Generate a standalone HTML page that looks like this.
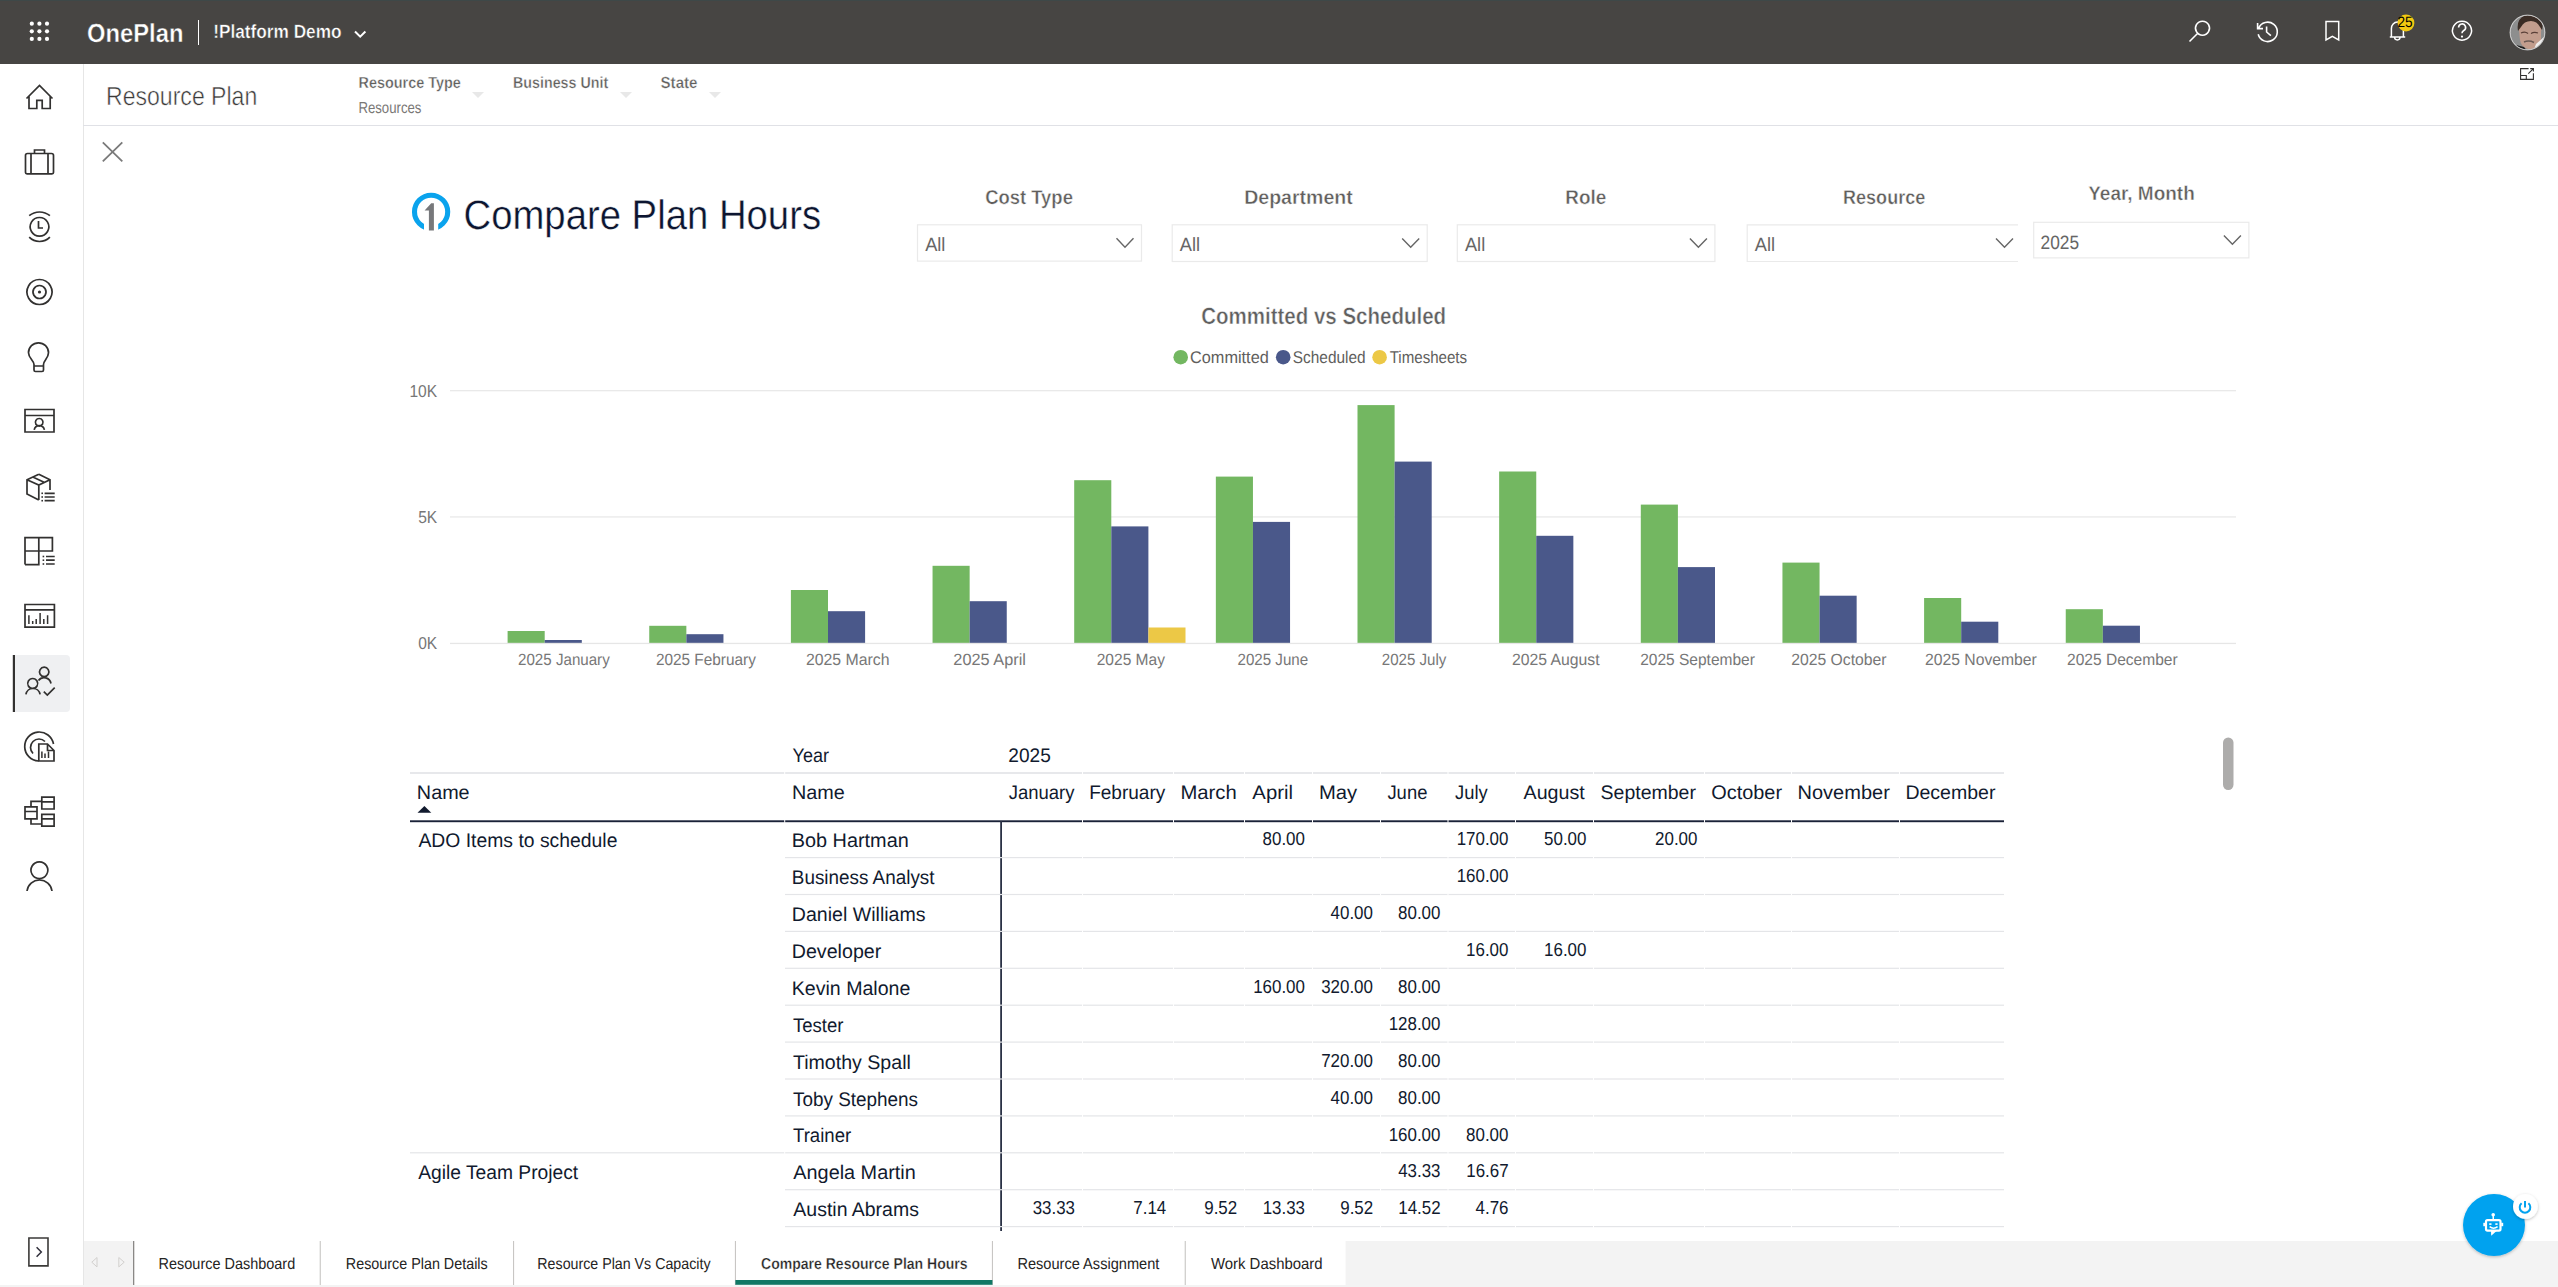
<!DOCTYPE html>
<html><head><meta charset="utf-8"><title>OnePlan - Compare Plan Hours</title>
<style>
html,body{margin:0;padding:0;background:#fff;overflow:hidden;}
body{width:2558px;height:1287px;position:relative;font-family:"Liberation Sans",sans-serif;}
svg{position:absolute;left:0;top:0;}
svg text{font-family:"Liberation Sans",sans-serif;}
</style></head>
<body>
<svg width="2558" height="1287" viewBox="0 0 2558 1287" text-rendering="geometricPrecision" shape-rendering="auto">
<rect x="0.00" y="0.00" width="2558.00" height="64.00" fill="#474543"/>
<rect x="0.00" y="0.00" width="2558.00" height="1.00" fill="#3e4848"/>
<circle cx="31.8" cy="23.7" r="2.1" fill="#fff"/>
<circle cx="31.8" cy="31.3" r="2.1" fill="#fff"/>
<circle cx="31.8" cy="38.9" r="2.1" fill="#fff"/>
<circle cx="39.4" cy="23.7" r="2.1" fill="#fff"/>
<circle cx="39.4" cy="31.3" r="2.1" fill="#fff"/>
<circle cx="39.4" cy="38.9" r="2.1" fill="#fff"/>
<circle cx="47.0" cy="23.7" r="2.1" fill="#fff"/>
<circle cx="47.0" cy="31.3" r="2.1" fill="#fff"/>
<circle cx="47.0" cy="38.9" r="2.1" fill="#fff"/>
<text x="87.05" y="41.70" font-size="26.02" font-weight="bold" fill="#fff" textLength="96.42" lengthAdjust="spacingAndGlyphs" stroke="#474543" stroke-width="0.4">OnePlan</text>
<rect x="198.00" y="20.00" width="1.00" height="25.00" fill="#fff"/>
<text x="213.26" y="37.90" font-size="19.19" font-weight="bold" fill="#fff" textLength="128.29" lengthAdjust="spacingAndGlyphs" stroke="#474543" stroke-width="0.4">!Platform Demo</text>
<path d="M355,31.5 L360.2,36.7 L365.4,31.5" fill="none" stroke="#fff" stroke-width="2"/>
<path d="M2202.5,21.2 a7,7 0 1 1 -0.01,0 Z M2197.5,33.5 L2189.5,41.5" fill="none" stroke="#fff" stroke-width="1.6"/>
<path d="M2258.2,34.3 A9.7,9.7 0 1 0 2258.6,28.2 M2257.6,23 V28.6 H2263 M2266.6,26.6 V32 L2270.9,35.6" fill="none" stroke="#fff" stroke-width="1.6"/>
<path d="M2326,21.5 H2338.7 V40 L2332.35,36.4 L2326,40 Z" fill="none" stroke="#fff" stroke-width="1.5"/>
<path d="M2389.8,36.9 H2405.2 M2391.4,36.9 V28.5 A5.8,6.2 0 0 1 2403.4,28.5 V36.9 M2394.6,37.3 a2.7,2.6 0 0 0 5.4,0" fill="none" stroke="#fff" stroke-width="1.5"/>
<circle cx="2406" cy="23" r="8.4" fill="#f2c811"/>
<text x="2397.52" y="26.60" font-size="14.97" font-weight="normal" fill="#000" textLength="15.16" lengthAdjust="spacingAndGlyphs">25</text>
<path d="M2462,21.2 a9.5,9.5 0 1 1 -0.01,0 Z" fill="none" stroke="#fff" stroke-width="1.5"/>
<path d="M2458.6,27.5 a3.5,3.5 0 1 1 5.2,3 c-1.2,0.7 -1.8,1.4 -1.8,2.8" fill="none" stroke="#fff" stroke-width="1.6"/>
<circle cx="2462" cy="36.6" r="1.1" fill="#fff"/>
<defs><radialGradient id="av" cx="50%" cy="40%" r="60%"><stop offset="0" stop-color="#9a9590"/><stop offset="0.6" stop-color="#6c6864"/><stop offset="1" stop-color="#3b3936"/></radialGradient><clipPath id="avc"><circle cx="2527.5" cy="32.5" r="17"/></clipPath></defs>
<circle cx="2527.5" cy="32.5" r="17.6" fill="#c9c9c9"/>
<g clip-path="url(#avc)"><rect x="2509" y="14" width="38" height="38" fill="#8d8e8e"/><path d="M2519,30 Q2517,20 2524,17 Q2532,14 2539,19 Q2543,24 2541,32 L2541,44 Q2536,50 2528,49 Q2521,47 2520,40 Z" fill="#c29d8d"/><path d="M2518,31 Q2516,19 2525,15.5 Q2534,13.5 2540,18 Q2544,23 2542,30 L2540,27 Q2537,21 2531,21 Q2524,21 2521,27 Z" fill="#3a2c25"/><path d="M2521,33 Q2525,31 2528,33.5 M2531,33.5 Q2534,31.5 2538,33" stroke="#5a4038" stroke-width="1.3" fill="none"/><path d="M2524,42 Q2529,40 2534,42.5" stroke="#6b5a55" stroke-width="1.5" fill="none"/><path d="M2536,44 L2545,36 L2547,52 L2533,52 Z" fill="#eeeeee"/><path d="M2512,52 L2516,45 L2524,47 L2528,52 Z" fill="#1e1e1e"/></g>
<circle cx="2527.5" cy="32.5" r="17.4" fill="none" stroke="#cfcfcf" stroke-width="0.9"/>
<rect x="83.00" y="64.00" width="1.00" height="1223.00" fill="#e6e6e6"/>
<path d="M26.5,98.5 L39.5,85.5 L52.5,98.5 M29,96.5 V108.5 H36.8 V100.3 H42.2 V108.5 H50.2 V96.5" fill="none" stroke="#323130" stroke-width="1.7"/>
<path d="M25.5,155.5 Q25.5,153.5 27.5,153.5 H51.5 Q53.5,153.5 53.5,155.5 V172.5 Q53.5,173.8 52,173.8 H27 Q25.5,173.8 25.5,172.5 Z M34.5,153.5 V150 H44.5 V153.5 M31,153.5 V173.8 M48,153.5 V173.8" fill="none" stroke="#323130" stroke-width="1.7"/>
<path d="M39.5,217.5 a9.3,9.3 0 1 1 -0.01,0 Z M38.5,221 V228 H43" fill="none" stroke="#323130" stroke-width="1.7"/>
<path d="M29.2,215.7 A16.3,16.3 0 0 1 49.9,215.7 M29.2,237.1 A14.4,14.4 0 0 0 49.9,237.1" fill="none" stroke="#323130" stroke-width="1.7"/>
<path d="M39.5,279.5 a12.5,12.5 0 1 1 -0.01,0 Z M39.5,285.5 a6.5,6.5 0 1 1 -0.01,0 Z" fill="none" stroke="#323130" stroke-width="1.7"/>
<circle cx="39.5" cy="292" r="1.6" fill="#323130"/>
<path d="M34,364.5 C34,360.5 28.5,358 28.5,352.8 A10,10 0 1 1 48.5,352.8 C48.5,358 43.5,360.5 43.5,364.5 V370 Q43.5,371.5 42,371.5 H35.5 Q34,371.5 34,370 Z M34,366 H43.5" fill="none" stroke="#323130" stroke-width="1.7"/>
<path d="M25,409.5 H54 V432 H25 Z M25,415.5 H54" fill="none" stroke="#323130" stroke-width="1.7"/>
<path d="M39.2,418.5 a3.8,3.8 0 1 1 -0.01,0 Z M34.2,429.8 A5.2,5.2 0 0 1 44.4,429.8" fill="none" stroke="#323130" stroke-width="1.7"/>
<path d="M38.8,474.3 L50,479.7 V490 M38.8,474.3 L27,479.7 V494 L38.8,500 M27,479.7 L38.8,485.1 L50,479.7 M38.8,485.1 V500 M32.8,477 L44.6,482.4" fill="none" stroke="#323130" stroke-width="1.7"/>
<path d="M44.6,493.3 H54.7 M44.6,497 H54.7 M44.6,500.7 H54.7" fill="none" stroke="#323130" stroke-width="1.7"/>
<rect x="41.4" y="492.5" width="1.6" height="1.6" fill="#323130"/><rect x="41.4" y="496.2" width="1.6" height="1.6" fill="#323130"/><rect x="41.4" y="499.9" width="1.6" height="1.6" fill="#323130"/>
<path d="M25,564.6 V537.6 H52.4 V551 H25 M38.8,537.6 V564.6 H25" fill="none" stroke="#323130" stroke-width="1.7"/>
<path d="M46,556.5 H54.7 M46,560.2 H54.7 M46,564 H54.7" fill="none" stroke="#323130" stroke-width="1.7"/>
<rect x="42.6" y="555.7" width="1.6" height="1.6" fill="#323130"/><rect x="42.6" y="559.4" width="1.6" height="1.6" fill="#323130"/><rect x="42.6" y="563.2" width="1.6" height="1.6" fill="#323130"/>
<path d="M25,604.5 H54.4 V627.1 H25 Z M25,609.8 H54.4" fill="none" stroke="#323130" stroke-width="1.7"/>
<path d="M28.9,615.3 V624 M32.7,621 V624 M36.2,619 V624 M40.1,613 V624 M43.8,619 V624 M47.6,615.3 V624" fill="none" stroke="#323130" stroke-width="1.5"/>
<path d="M14.5,655 H66 Q70,655 70,659 V708 Q70,712 66,712 H14.5 Z" fill="#eff0f2"/>
<rect x="12.80" y="655.00" width="2.20" height="57.00" fill="#323130"/>
<path d="M44.2,667.2 a4.7,4.7 0 1 1 -0.01,0 Z M38.5,680.5 A7,7 0 0 1 51,683.5" fill="none" stroke="#323130" stroke-width="1.7"/>
<path d="M32.7,678.5 a5,5 0 1 1 -0.01,0 Z M25.9,694.4 A7.2,7.2 0 0 1 40.1,694.4" fill="none" stroke="#323130" stroke-width="1.7"/>
<path d="M43.8,691.7 L47.3,695 L54.7,687.6" fill="none" stroke="#323130" stroke-width="1.7"/>
<path d="M38.5,761 A14.5,14.5 0 1 1 53.5,744" fill="none" stroke="#323130" stroke-width="1.7"/>
<path d="M33,753.5 A7.5,7.5 0 0 1 45,741.5" fill="none" stroke="#323130" stroke-width="1.7"/>
<path d="M38.8,744 H47.5 L54,750.5 V761 H38.8 Z M47.5,744 V750.5 H54" fill="none" stroke="#323130" stroke-width="1.7"/>
<path d="M41.9,751.5 V758 M45,753.5 V758 M48.5,751.5 V758" fill="none" stroke="#323130" stroke-width="1.5"/>
<path d="M41.8,797.1 H54.1 V809 H41.8 Z M41.8,801.8 H54.1 M25,806.9 H37 V818.9 H25 Z M25,811.5 H37 M41.8,814.3 H54.1 V826.1 H41.8 Z M41.8,818.9 H54.1" fill="none" stroke="#323130" stroke-width="1.7"/>
<path d="M31,806.9 V801.3 H41.8 M31,818.9 V824 H41.8" fill="none" stroke="#323130" stroke-width="1.7"/>
<path d="M39.4,861.8 a8.4,8.4 0 1 1 -0.01,0 Z M27,891 A12.6,12.6 0 0 1 52,891" fill="none" stroke="#323130" stroke-width="1.7"/>
<path d="M28.9,1238 H48 V1265.9 H28.9 Z" fill="none" stroke="#3b3a38" stroke-width="1.6"/>
<path d="M36.6,1247.3 L41.3,1252 L36.6,1256.7" fill="none" stroke="#2f2e3a" stroke-width="1.5"/>
<text x="106.00" y="105.00" font-size="26.31" font-weight="normal" fill="#3b3a39" textLength="151.28" lengthAdjust="spacingAndGlyphs" stroke="#fff" stroke-width="0.5">Resource Plan</text>
<text x="358.53" y="88.20" font-size="15.99" font-weight="bold" fill="#605e5c" textLength="102.35" lengthAdjust="spacingAndGlyphs" stroke="#fff" stroke-width="0.35">Resource Type</text>
<text x="358.41" y="112.80" font-size="15.99" font-weight="normal" fill="#7a7876" textLength="63.05" lengthAdjust="spacingAndGlyphs">Resources</text>
<text x="513.04" y="88.20" font-size="15.99" font-weight="bold" fill="#605e5c" textLength="95.15" lengthAdjust="spacingAndGlyphs" stroke="#fff" stroke-width="0.35">Business Unit</text>
<text x="660.55" y="88.20" font-size="15.99" font-weight="bold" fill="#605e5c" textLength="36.95" lengthAdjust="spacingAndGlyphs" stroke="#fff" stroke-width="0.35">State</text>
<path d="M472,92 H484 L478,98 Z" fill="#e8e8e8"/>
<path d="M620,92 H632 L626,98 Z" fill="#e8e8e8"/>
<path d="M709,92 H721 L715,98 Z" fill="#e8e8e8"/>
<rect x="83.00" y="125.00" width="2475.00" height="1.00" fill="#e0e1e6"/>
<path d="M2528.6,68.6 H2520.6 V79.4 H2533.4 V73.3 M2520.6,75.5 H2526.3 V79.4 M2530.2,68.6 H2533.4 V71.5 M2528.3,73.7 L2533.2,68.8" fill="none" stroke="#323130" stroke-width="1.1"/>
<path d="M102.8,142.4 L122.3,161.3 M122.3,142.4 L102.8,161.3" fill="none" stroke="#7a7a7a" stroke-width="1.8"/>
<circle cx="431.1" cy="211.8" r="16.6" fill="none" stroke="#0aa3ed" stroke-width="5.1"/>
<rect x="424.00" y="219.00" width="14.20" height="14.00" fill="#fff"/>
<path d="M428.9,210.4 H424.6 L431.2,203.3 H433.9 V230.6 H428.9 Z" fill="#77787b"/>
<text x="463.49" y="229.00" font-size="41.28" font-weight="normal" fill="#0c1530" textLength="357.56" lengthAdjust="spacingAndGlyphs" stroke="#fff" stroke-width="0.4">Compare Plan Hours</text>
<text x="985.16" y="204.00" font-size="20.06" font-weight="bold" fill="#605e5c" textLength="87.73" lengthAdjust="spacingAndGlyphs" stroke="#fff" stroke-width="0.4">Cost Type</text>
<rect x="917.50" y="224.80" width="224.00" height="36.30" fill="#fff" stroke="#eaeaea" stroke-width="1.2"/>
<text x="925.15" y="250.70" font-size="19.19" font-weight="normal" fill="#666" textLength="20.26" lengthAdjust="spacingAndGlyphs">All</text>
<path d="M1116.5,238.25000000000003 L1125,247.15 L1133.5,238.25000000000003" fill="none" stroke="#666" stroke-width="1.4"/>
<text x="1244.18" y="204.00" font-size="20.06" font-weight="bold" fill="#605e5c" textLength="108.65" lengthAdjust="spacingAndGlyphs" stroke="#fff" stroke-width="0.4">Department</text>
<rect x="1172.20" y="224.80" width="255.00" height="36.70" fill="#fff" stroke="#eaeaea" stroke-width="1.2"/>
<text x="1179.85" y="251.10" font-size="19.19" font-weight="normal" fill="#666" textLength="20.26" lengthAdjust="spacingAndGlyphs">All</text>
<path d="M1402.2,238.45000000000002 L1410.7,247.35 L1419.2,238.45000000000002" fill="none" stroke="#666" stroke-width="1.4"/>
<text x="1565.33" y="204.00" font-size="20.06" font-weight="bold" fill="#605e5c" textLength="40.93" lengthAdjust="spacingAndGlyphs" stroke="#fff" stroke-width="0.4">Role</text>
<rect x="1457.30" y="224.80" width="257.60" height="36.70" fill="#fff" stroke="#eaeaea" stroke-width="1.2"/>
<text x="1464.95" y="251.10" font-size="19.19" font-weight="normal" fill="#666" textLength="20.26" lengthAdjust="spacingAndGlyphs">All</text>
<path d="M1689.9,238.45000000000002 L1698.4,247.35 L1706.9,238.45000000000002" fill="none" stroke="#666" stroke-width="1.4"/>
<text x="1843.08" y="204.00" font-size="20.06" font-weight="bold" fill="#605e5c" textLength="82.11" lengthAdjust="spacingAndGlyphs" stroke="#fff" stroke-width="0.4">Resource</text>
<path d="M2018.00,224.80 H1747.20 V261.50 H2018.00" fill="#fff" stroke="#eaeaea" stroke-width="1.2"/>
<text x="1754.85" y="251.10" font-size="19.19" font-weight="normal" fill="#666" textLength="20.26" lengthAdjust="spacingAndGlyphs">All</text>
<path d="M1996.0,238.45000000000002 L2004.5,247.35 L2013.0,238.45000000000002" fill="none" stroke="#666" stroke-width="1.4"/>
<text x="2088.27" y="200.20" font-size="20.06" font-weight="bold" fill="#605e5c" textLength="106.47" lengthAdjust="spacingAndGlyphs" stroke="#fff" stroke-width="0.4">Year, Month</text>
<rect x="2033.70" y="222.30" width="215.20" height="35.60" fill="#fff" stroke="#eaeaea" stroke-width="1.2"/>
<text x="2040.53" y="248.80" font-size="19.19" font-weight="normal" fill="#666" textLength="38.50" lengthAdjust="spacingAndGlyphs">2025</text>
<path d="M2223.9,235.4 L2232.4,244.29999999999998 L2240.9,235.4" fill="none" stroke="#666" stroke-width="1.4"/>
<text x="1201.18" y="323.70" font-size="23.55" font-weight="bold" fill="#5f5f5f" textLength="244.95" lengthAdjust="spacingAndGlyphs" stroke="#fff" stroke-width="0.45">Committed vs Scheduled</text>
<circle cx="1180.7" cy="357.2" r="7.3" fill="#73b761"/>
<circle cx="1283.2" cy="357.2" r="7.3" fill="#4a588a"/>
<circle cx="1379.6" cy="357.2" r="7.3" fill="#ecc846"/>
<text x="1189.99" y="363.20" font-size="17.01" font-weight="normal" fill="#605e5c" textLength="78.77" lengthAdjust="spacingAndGlyphs">Committed</text>
<text x="1292.81" y="363.20" font-size="17.01" font-weight="normal" fill="#605e5c" textLength="72.77" lengthAdjust="spacingAndGlyphs">Scheduled</text>
<text x="1389.66" y="363.20" font-size="17.01" font-weight="normal" fill="#605e5c" textLength="77.45" lengthAdjust="spacingAndGlyphs">Timesheets</text>
<rect x="450.00" y="390.00" width="1786.00" height="1.30" fill="#e9e9e9"/>
<rect x="450.00" y="516.30" width="1786.00" height="1.30" fill="#e9e9e9"/>
<text x="409.43" y="396.70" font-size="17.30" font-weight="normal" fill="#777" textLength="27.75" lengthAdjust="spacingAndGlyphs">10K</text>
<text x="418.18" y="522.70" font-size="17.30" font-weight="normal" fill="#777" textLength="19.03" lengthAdjust="spacingAndGlyphs">5K</text>
<text x="418.18" y="649.10" font-size="17.30" font-weight="normal" fill="#777" textLength="19.03" lengthAdjust="spacingAndGlyphs">0K</text>
<rect x="507.60" y="631.00" width="37.10" height="12.20" fill="#73b761"/>
<rect x="544.70" y="640.00" width="37.10" height="3.20" fill="#4a588a"/>
<rect x="649.25" y="625.80" width="37.10" height="17.40" fill="#73b761"/>
<rect x="686.35" y="634.20" width="37.10" height="9.00" fill="#4a588a"/>
<rect x="790.90" y="590.00" width="37.10" height="53.20" fill="#73b761"/>
<rect x="828.00" y="611.20" width="37.10" height="32.00" fill="#4a588a"/>
<rect x="932.55" y="565.80" width="37.10" height="77.40" fill="#73b761"/>
<rect x="969.65" y="601.20" width="37.10" height="42.00" fill="#4a588a"/>
<rect x="1074.20" y="480.20" width="37.10" height="163.00" fill="#73b761"/>
<rect x="1111.30" y="526.40" width="37.10" height="116.80" fill="#4a588a"/>
<rect x="1148.40" y="627.50" width="37.10" height="15.70" fill="#ecc846"/>
<rect x="1215.85" y="476.60" width="37.10" height="166.60" fill="#73b761"/>
<rect x="1252.95" y="521.90" width="37.10" height="121.30" fill="#4a588a"/>
<rect x="1357.50" y="405.10" width="37.10" height="238.10" fill="#73b761"/>
<rect x="1394.60" y="461.60" width="37.10" height="181.60" fill="#4a588a"/>
<rect x="1499.15" y="471.50" width="37.10" height="171.70" fill="#73b761"/>
<rect x="1536.25" y="535.80" width="37.10" height="107.40" fill="#4a588a"/>
<rect x="1640.80" y="504.60" width="37.10" height="138.60" fill="#73b761"/>
<rect x="1677.90" y="567.10" width="37.10" height="76.10" fill="#4a588a"/>
<rect x="1782.45" y="562.60" width="37.10" height="80.60" fill="#73b761"/>
<rect x="1819.55" y="595.70" width="37.10" height="47.50" fill="#4a588a"/>
<rect x="1924.10" y="598.00" width="37.10" height="45.20" fill="#73b761"/>
<rect x="1961.20" y="621.70" width="37.10" height="21.50" fill="#4a588a"/>
<rect x="2065.75" y="609.20" width="37.10" height="34.00" fill="#73b761"/>
<rect x="2102.85" y="625.70" width="37.10" height="17.50" fill="#4a588a"/>
<rect x="450.00" y="642.80" width="1786.00" height="1.30" fill="#e6e6e6"/>
<text x="518.04" y="665.00" font-size="16.28" font-weight="normal" fill="#777" textLength="91.70" lengthAdjust="spacingAndGlyphs">2025 January</text>
<text x="655.93" y="665.00" font-size="16.28" font-weight="normal" fill="#777" textLength="99.89" lengthAdjust="spacingAndGlyphs">2025 February</text>
<text x="805.91" y="665.00" font-size="16.28" font-weight="normal" fill="#777" textLength="83.60" lengthAdjust="spacingAndGlyphs">2025 March</text>
<text x="953.38" y="665.00" font-size="16.28" font-weight="normal" fill="#777" textLength="72.52" lengthAdjust="spacingAndGlyphs">2025 April</text>
<text x="1096.72" y="665.00" font-size="16.28" font-weight="normal" fill="#777" textLength="68.20" lengthAdjust="spacingAndGlyphs">2025 May</text>
<text x="1237.54" y="665.00" font-size="16.28" font-weight="normal" fill="#777" textLength="70.61" lengthAdjust="spacingAndGlyphs">2025 June</text>
<text x="1381.75" y="665.00" font-size="16.28" font-weight="normal" fill="#777" textLength="64.61" lengthAdjust="spacingAndGlyphs">2025 July</text>
<text x="1511.91" y="665.00" font-size="16.28" font-weight="normal" fill="#777" textLength="87.72" lengthAdjust="spacingAndGlyphs">2025 August</text>
<text x="1640.23" y="665.00" font-size="16.28" font-weight="normal" fill="#777" textLength="114.60" lengthAdjust="spacingAndGlyphs">2025 September</text>
<text x="1791.21" y="665.00" font-size="16.28" font-weight="normal" fill="#777" textLength="95.42" lengthAdjust="spacingAndGlyphs">2025 October</text>
<text x="1924.91" y="665.00" font-size="16.28" font-weight="normal" fill="#777" textLength="111.93" lengthAdjust="spacingAndGlyphs">2025 November</text>
<text x="2067.02" y="665.00" font-size="16.28" font-weight="normal" fill="#777" textLength="110.62" lengthAdjust="spacingAndGlyphs">2025 December</text>
<text x="792.59" y="762.00" font-size="19.62" font-weight="normal" fill="#111a2e" textLength="36.39" lengthAdjust="spacingAndGlyphs">Year</text>
<text x="1008.35" y="762.00" font-size="19.62" font-weight="normal" fill="#111a2e" textLength="42.46" lengthAdjust="spacingAndGlyphs">2025</text>
<rect x="410.00" y="772.10" width="1594.00" height="1.80" fill="#e5e6e9"/>
<text x="416.87" y="799.00" font-size="19.62" font-weight="normal" fill="#111a2e" textLength="52.77" lengthAdjust="spacingAndGlyphs">Name</text>
<text x="791.97" y="799.00" font-size="19.62" font-weight="normal" fill="#111a2e" textLength="52.77" lengthAdjust="spacingAndGlyphs">Name</text>
<text x="1008.72" y="799.00" font-size="19.62" font-weight="normal" fill="#111a2e" textLength="65.73" lengthAdjust="spacingAndGlyphs">January</text>
<text x="1089.13" y="799.00" font-size="19.62" font-weight="normal" fill="#111a2e" textLength="76.20" lengthAdjust="spacingAndGlyphs">February</text>
<text x="1180.43" y="799.00" font-size="19.62" font-weight="normal" fill="#111a2e" textLength="56.25" lengthAdjust="spacingAndGlyphs">March</text>
<text x="1252.35" y="799.00" font-size="19.62" font-weight="normal" fill="#111a2e" textLength="40.63" lengthAdjust="spacingAndGlyphs">April</text>
<text x="1318.93" y="799.00" font-size="19.62" font-weight="normal" fill="#111a2e" textLength="38.20" lengthAdjust="spacingAndGlyphs">May</text>
<text x="1387.42" y="799.00" font-size="19.62" font-weight="normal" fill="#111a2e" textLength="39.98" lengthAdjust="spacingAndGlyphs">June</text>
<text x="1455.02" y="799.00" font-size="19.62" font-weight="normal" fill="#111a2e" textLength="32.64" lengthAdjust="spacingAndGlyphs">July</text>
<text x="1523.55" y="799.00" font-size="19.62" font-weight="normal" fill="#111a2e" textLength="61.11" lengthAdjust="spacingAndGlyphs">August</text>
<text x="1600.62" y="799.00" font-size="19.62" font-weight="normal" fill="#111a2e" textLength="95.30" lengthAdjust="spacingAndGlyphs">September</text>
<text x="1711.25" y="799.00" font-size="19.62" font-weight="normal" fill="#111a2e" textLength="70.84" lengthAdjust="spacingAndGlyphs">October</text>
<text x="1797.55" y="799.00" font-size="19.62" font-weight="normal" fill="#111a2e" textLength="92.26" lengthAdjust="spacingAndGlyphs">November</text>
<text x="1905.39" y="799.00" font-size="19.62" font-weight="normal" fill="#111a2e" textLength="90.11" lengthAdjust="spacingAndGlyphs">December</text>
<path d="M417.5,812.7 H431.3 L424.4,806 Z" fill="#111a2e"/>
<rect x="410.00" y="820.30" width="1594.00" height="1.90" fill="#1a2238"/>
<rect x="1000.20" y="821.00" width="1.80" height="410.00" fill="#2a3145"/>
<rect x="785.00" y="857.00" width="1219.00" height="1.20" fill="#e4e5e8"/>
<rect x="785.00" y="893.90" width="1219.00" height="1.20" fill="#e4e5e8"/>
<rect x="785.00" y="930.80" width="1219.00" height="1.20" fill="#e4e5e8"/>
<rect x="785.00" y="967.70" width="1219.00" height="1.20" fill="#e4e5e8"/>
<rect x="785.00" y="1004.60" width="1219.00" height="1.20" fill="#e4e5e8"/>
<rect x="785.00" y="1041.50" width="1219.00" height="1.20" fill="#e4e5e8"/>
<rect x="785.00" y="1078.40" width="1219.00" height="1.20" fill="#e4e5e8"/>
<rect x="785.00" y="1115.30" width="1219.00" height="1.20" fill="#e4e5e8"/>
<rect x="410.00" y="1152.20" width="1594.00" height="1.20" fill="#e4e5e8"/>
<rect x="785.00" y="1189.10" width="1219.00" height="1.20" fill="#e4e5e8"/>
<rect x="785.00" y="1226.00" width="1219.00" height="1.20" fill="#e4e5e8"/>
<rect x="784.20" y="771.50" width="1.00" height="3.00" fill="#fff"/>
<rect x="784.20" y="819.80" width="1.00" height="3.00" fill="#fff"/>
<rect x="784.20" y="1151.70" width="1.00" height="2.20" fill="#fff"/>
<rect x="1082.00" y="771.50" width="1.00" height="3.00" fill="#fff"/>
<rect x="1082.00" y="819.80" width="1.00" height="3.00" fill="#fff"/>
<rect x="1082.00" y="856.50" width="1.00" height="2.20" fill="#fff"/>
<rect x="1082.00" y="893.40" width="1.00" height="2.20" fill="#fff"/>
<rect x="1082.00" y="930.30" width="1.00" height="2.20" fill="#fff"/>
<rect x="1082.00" y="967.20" width="1.00" height="2.20" fill="#fff"/>
<rect x="1082.00" y="1004.10" width="1.00" height="2.20" fill="#fff"/>
<rect x="1082.00" y="1041.00" width="1.00" height="2.20" fill="#fff"/>
<rect x="1082.00" y="1077.90" width="1.00" height="2.20" fill="#fff"/>
<rect x="1082.00" y="1114.80" width="1.00" height="2.20" fill="#fff"/>
<rect x="1082.00" y="1151.70" width="1.00" height="2.20" fill="#fff"/>
<rect x="1082.00" y="1188.60" width="1.00" height="2.20" fill="#fff"/>
<rect x="1082.00" y="1225.50" width="1.00" height="2.20" fill="#fff"/>
<rect x="1173.00" y="771.50" width="1.00" height="3.00" fill="#fff"/>
<rect x="1173.00" y="819.80" width="1.00" height="3.00" fill="#fff"/>
<rect x="1173.00" y="856.50" width="1.00" height="2.20" fill="#fff"/>
<rect x="1173.00" y="893.40" width="1.00" height="2.20" fill="#fff"/>
<rect x="1173.00" y="930.30" width="1.00" height="2.20" fill="#fff"/>
<rect x="1173.00" y="967.20" width="1.00" height="2.20" fill="#fff"/>
<rect x="1173.00" y="1004.10" width="1.00" height="2.20" fill="#fff"/>
<rect x="1173.00" y="1041.00" width="1.00" height="2.20" fill="#fff"/>
<rect x="1173.00" y="1077.90" width="1.00" height="2.20" fill="#fff"/>
<rect x="1173.00" y="1114.80" width="1.00" height="2.20" fill="#fff"/>
<rect x="1173.00" y="1151.70" width="1.00" height="2.20" fill="#fff"/>
<rect x="1173.00" y="1188.60" width="1.00" height="2.20" fill="#fff"/>
<rect x="1173.00" y="1225.50" width="1.00" height="2.20" fill="#fff"/>
<rect x="1244.00" y="771.50" width="1.00" height="3.00" fill="#fff"/>
<rect x="1244.00" y="819.80" width="1.00" height="3.00" fill="#fff"/>
<rect x="1244.00" y="856.50" width="1.00" height="2.20" fill="#fff"/>
<rect x="1244.00" y="893.40" width="1.00" height="2.20" fill="#fff"/>
<rect x="1244.00" y="930.30" width="1.00" height="2.20" fill="#fff"/>
<rect x="1244.00" y="967.20" width="1.00" height="2.20" fill="#fff"/>
<rect x="1244.00" y="1004.10" width="1.00" height="2.20" fill="#fff"/>
<rect x="1244.00" y="1041.00" width="1.00" height="2.20" fill="#fff"/>
<rect x="1244.00" y="1077.90" width="1.00" height="2.20" fill="#fff"/>
<rect x="1244.00" y="1114.80" width="1.00" height="2.20" fill="#fff"/>
<rect x="1244.00" y="1151.70" width="1.00" height="2.20" fill="#fff"/>
<rect x="1244.00" y="1188.60" width="1.00" height="2.20" fill="#fff"/>
<rect x="1244.00" y="1225.50" width="1.00" height="2.20" fill="#fff"/>
<rect x="1312.00" y="771.50" width="1.00" height="3.00" fill="#fff"/>
<rect x="1312.00" y="819.80" width="1.00" height="3.00" fill="#fff"/>
<rect x="1312.00" y="856.50" width="1.00" height="2.20" fill="#fff"/>
<rect x="1312.00" y="893.40" width="1.00" height="2.20" fill="#fff"/>
<rect x="1312.00" y="930.30" width="1.00" height="2.20" fill="#fff"/>
<rect x="1312.00" y="967.20" width="1.00" height="2.20" fill="#fff"/>
<rect x="1312.00" y="1004.10" width="1.00" height="2.20" fill="#fff"/>
<rect x="1312.00" y="1041.00" width="1.00" height="2.20" fill="#fff"/>
<rect x="1312.00" y="1077.90" width="1.00" height="2.20" fill="#fff"/>
<rect x="1312.00" y="1114.80" width="1.00" height="2.20" fill="#fff"/>
<rect x="1312.00" y="1151.70" width="1.00" height="2.20" fill="#fff"/>
<rect x="1312.00" y="1188.60" width="1.00" height="2.20" fill="#fff"/>
<rect x="1312.00" y="1225.50" width="1.00" height="2.20" fill="#fff"/>
<rect x="1380.00" y="771.50" width="1.00" height="3.00" fill="#fff"/>
<rect x="1380.00" y="819.80" width="1.00" height="3.00" fill="#fff"/>
<rect x="1380.00" y="856.50" width="1.00" height="2.20" fill="#fff"/>
<rect x="1380.00" y="893.40" width="1.00" height="2.20" fill="#fff"/>
<rect x="1380.00" y="930.30" width="1.00" height="2.20" fill="#fff"/>
<rect x="1380.00" y="967.20" width="1.00" height="2.20" fill="#fff"/>
<rect x="1380.00" y="1004.10" width="1.00" height="2.20" fill="#fff"/>
<rect x="1380.00" y="1041.00" width="1.00" height="2.20" fill="#fff"/>
<rect x="1380.00" y="1077.90" width="1.00" height="2.20" fill="#fff"/>
<rect x="1380.00" y="1114.80" width="1.00" height="2.20" fill="#fff"/>
<rect x="1380.00" y="1151.70" width="1.00" height="2.20" fill="#fff"/>
<rect x="1380.00" y="1188.60" width="1.00" height="2.20" fill="#fff"/>
<rect x="1380.00" y="1225.50" width="1.00" height="2.20" fill="#fff"/>
<rect x="1447.50" y="771.50" width="1.00" height="3.00" fill="#fff"/>
<rect x="1447.50" y="819.80" width="1.00" height="3.00" fill="#fff"/>
<rect x="1447.50" y="856.50" width="1.00" height="2.20" fill="#fff"/>
<rect x="1447.50" y="893.40" width="1.00" height="2.20" fill="#fff"/>
<rect x="1447.50" y="930.30" width="1.00" height="2.20" fill="#fff"/>
<rect x="1447.50" y="967.20" width="1.00" height="2.20" fill="#fff"/>
<rect x="1447.50" y="1004.10" width="1.00" height="2.20" fill="#fff"/>
<rect x="1447.50" y="1041.00" width="1.00" height="2.20" fill="#fff"/>
<rect x="1447.50" y="1077.90" width="1.00" height="2.20" fill="#fff"/>
<rect x="1447.50" y="1114.80" width="1.00" height="2.20" fill="#fff"/>
<rect x="1447.50" y="1151.70" width="1.00" height="2.20" fill="#fff"/>
<rect x="1447.50" y="1188.60" width="1.00" height="2.20" fill="#fff"/>
<rect x="1447.50" y="1225.50" width="1.00" height="2.20" fill="#fff"/>
<rect x="1515.00" y="771.50" width="1.00" height="3.00" fill="#fff"/>
<rect x="1515.00" y="819.80" width="1.00" height="3.00" fill="#fff"/>
<rect x="1515.00" y="856.50" width="1.00" height="2.20" fill="#fff"/>
<rect x="1515.00" y="893.40" width="1.00" height="2.20" fill="#fff"/>
<rect x="1515.00" y="930.30" width="1.00" height="2.20" fill="#fff"/>
<rect x="1515.00" y="967.20" width="1.00" height="2.20" fill="#fff"/>
<rect x="1515.00" y="1004.10" width="1.00" height="2.20" fill="#fff"/>
<rect x="1515.00" y="1041.00" width="1.00" height="2.20" fill="#fff"/>
<rect x="1515.00" y="1077.90" width="1.00" height="2.20" fill="#fff"/>
<rect x="1515.00" y="1114.80" width="1.00" height="2.20" fill="#fff"/>
<rect x="1515.00" y="1151.70" width="1.00" height="2.20" fill="#fff"/>
<rect x="1515.00" y="1188.60" width="1.00" height="2.20" fill="#fff"/>
<rect x="1515.00" y="1225.50" width="1.00" height="2.20" fill="#fff"/>
<rect x="1593.00" y="771.50" width="1.00" height="3.00" fill="#fff"/>
<rect x="1593.00" y="819.80" width="1.00" height="3.00" fill="#fff"/>
<rect x="1593.00" y="856.50" width="1.00" height="2.20" fill="#fff"/>
<rect x="1593.00" y="893.40" width="1.00" height="2.20" fill="#fff"/>
<rect x="1593.00" y="930.30" width="1.00" height="2.20" fill="#fff"/>
<rect x="1593.00" y="967.20" width="1.00" height="2.20" fill="#fff"/>
<rect x="1593.00" y="1004.10" width="1.00" height="2.20" fill="#fff"/>
<rect x="1593.00" y="1041.00" width="1.00" height="2.20" fill="#fff"/>
<rect x="1593.00" y="1077.90" width="1.00" height="2.20" fill="#fff"/>
<rect x="1593.00" y="1114.80" width="1.00" height="2.20" fill="#fff"/>
<rect x="1593.00" y="1151.70" width="1.00" height="2.20" fill="#fff"/>
<rect x="1593.00" y="1188.60" width="1.00" height="2.20" fill="#fff"/>
<rect x="1593.00" y="1225.50" width="1.00" height="2.20" fill="#fff"/>
<rect x="1704.00" y="771.50" width="1.00" height="3.00" fill="#fff"/>
<rect x="1704.00" y="819.80" width="1.00" height="3.00" fill="#fff"/>
<rect x="1704.00" y="856.50" width="1.00" height="2.20" fill="#fff"/>
<rect x="1704.00" y="893.40" width="1.00" height="2.20" fill="#fff"/>
<rect x="1704.00" y="930.30" width="1.00" height="2.20" fill="#fff"/>
<rect x="1704.00" y="967.20" width="1.00" height="2.20" fill="#fff"/>
<rect x="1704.00" y="1004.10" width="1.00" height="2.20" fill="#fff"/>
<rect x="1704.00" y="1041.00" width="1.00" height="2.20" fill="#fff"/>
<rect x="1704.00" y="1077.90" width="1.00" height="2.20" fill="#fff"/>
<rect x="1704.00" y="1114.80" width="1.00" height="2.20" fill="#fff"/>
<rect x="1704.00" y="1151.70" width="1.00" height="2.20" fill="#fff"/>
<rect x="1704.00" y="1188.60" width="1.00" height="2.20" fill="#fff"/>
<rect x="1704.00" y="1225.50" width="1.00" height="2.20" fill="#fff"/>
<rect x="1791.00" y="771.50" width="1.00" height="3.00" fill="#fff"/>
<rect x="1791.00" y="819.80" width="1.00" height="3.00" fill="#fff"/>
<rect x="1791.00" y="856.50" width="1.00" height="2.20" fill="#fff"/>
<rect x="1791.00" y="893.40" width="1.00" height="2.20" fill="#fff"/>
<rect x="1791.00" y="930.30" width="1.00" height="2.20" fill="#fff"/>
<rect x="1791.00" y="967.20" width="1.00" height="2.20" fill="#fff"/>
<rect x="1791.00" y="1004.10" width="1.00" height="2.20" fill="#fff"/>
<rect x="1791.00" y="1041.00" width="1.00" height="2.20" fill="#fff"/>
<rect x="1791.00" y="1077.90" width="1.00" height="2.20" fill="#fff"/>
<rect x="1791.00" y="1114.80" width="1.00" height="2.20" fill="#fff"/>
<rect x="1791.00" y="1151.70" width="1.00" height="2.20" fill="#fff"/>
<rect x="1791.00" y="1188.60" width="1.00" height="2.20" fill="#fff"/>
<rect x="1791.00" y="1225.50" width="1.00" height="2.20" fill="#fff"/>
<rect x="1899.00" y="771.50" width="1.00" height="3.00" fill="#fff"/>
<rect x="1899.00" y="819.80" width="1.00" height="3.00" fill="#fff"/>
<rect x="1899.00" y="856.50" width="1.00" height="2.20" fill="#fff"/>
<rect x="1899.00" y="893.40" width="1.00" height="2.20" fill="#fff"/>
<rect x="1899.00" y="930.30" width="1.00" height="2.20" fill="#fff"/>
<rect x="1899.00" y="967.20" width="1.00" height="2.20" fill="#fff"/>
<rect x="1899.00" y="1004.10" width="1.00" height="2.20" fill="#fff"/>
<rect x="1899.00" y="1041.00" width="1.00" height="2.20" fill="#fff"/>
<rect x="1899.00" y="1077.90" width="1.00" height="2.20" fill="#fff"/>
<rect x="1899.00" y="1114.80" width="1.00" height="2.20" fill="#fff"/>
<rect x="1899.00" y="1151.70" width="1.00" height="2.20" fill="#fff"/>
<rect x="1899.00" y="1188.60" width="1.00" height="2.20" fill="#fff"/>
<rect x="1899.00" y="1225.50" width="1.00" height="2.20" fill="#fff"/>
<text x="791.76" y="847.20" font-size="19.77" font-weight="normal" fill="#111a2e" textLength="117.01" lengthAdjust="spacingAndGlyphs">Bob Hartman</text>
<text x="791.84" y="884.10" font-size="19.77" font-weight="normal" fill="#111a2e" textLength="142.69" lengthAdjust="spacingAndGlyphs">Business Analyst</text>
<text x="791.79" y="921.00" font-size="19.77" font-weight="normal" fill="#111a2e" textLength="133.79" lengthAdjust="spacingAndGlyphs">Daniel Williams</text>
<text x="791.78" y="957.90" font-size="19.77" font-weight="normal" fill="#111a2e" textLength="89.53" lengthAdjust="spacingAndGlyphs">Developer</text>
<text x="791.79" y="994.80" font-size="19.77" font-weight="normal" fill="#111a2e" textLength="118.58" lengthAdjust="spacingAndGlyphs">Kevin Malone</text>
<text x="792.98" y="1031.70" font-size="19.77" font-weight="normal" fill="#111a2e" textLength="50.51" lengthAdjust="spacingAndGlyphs">Tester</text>
<text x="792.96" y="1068.60" font-size="19.77" font-weight="normal" fill="#111a2e" textLength="117.88" lengthAdjust="spacingAndGlyphs">Timothy Spall</text>
<text x="792.97" y="1105.50" font-size="19.77" font-weight="normal" fill="#111a2e" textLength="125.11" lengthAdjust="spacingAndGlyphs">Toby Stephens</text>
<text x="792.98" y="1142.40" font-size="19.77" font-weight="normal" fill="#111a2e" textLength="58.21" lengthAdjust="spacingAndGlyphs">Trainer</text>
<text x="793.35" y="1179.30" font-size="19.77" font-weight="normal" fill="#111a2e" textLength="122.39" lengthAdjust="spacingAndGlyphs">Angela Martin</text>
<text x="793.35" y="1216.20" font-size="19.77" font-weight="normal" fill="#111a2e" textLength="125.53" lengthAdjust="spacingAndGlyphs">Austin Abrams</text>
<text x="418.45" y="847.20" font-size="19.77" font-weight="normal" fill="#111a2e" textLength="198.97" lengthAdjust="spacingAndGlyphs">ADO Items to schedule</text>
<text x="418.15" y="1179.30" font-size="19.77" font-weight="normal" fill="#111a2e" textLength="160.08" lengthAdjust="spacingAndGlyphs">Agile Team Project</text>
<text x="1262.58" y="845.30" font-size="18.75" font-weight="normal" fill="#111a2e" textLength="42.35" lengthAdjust="spacingAndGlyphs">80.00</text>
<text x="1456.69" y="845.30" font-size="18.75" font-weight="normal" fill="#111a2e" textLength="51.77" lengthAdjust="spacingAndGlyphs">170.00</text>
<text x="1544.08" y="845.30" font-size="18.75" font-weight="normal" fill="#111a2e" textLength="42.35" lengthAdjust="spacingAndGlyphs">50.00</text>
<text x="1655.08" y="845.30" font-size="18.75" font-weight="normal" fill="#111a2e" textLength="42.35" lengthAdjust="spacingAndGlyphs">20.00</text>
<text x="1456.69" y="882.20" font-size="18.75" font-weight="normal" fill="#111a2e" textLength="51.77" lengthAdjust="spacingAndGlyphs">160.00</text>
<text x="1330.58" y="919.10" font-size="18.75" font-weight="normal" fill="#111a2e" textLength="42.35" lengthAdjust="spacingAndGlyphs">40.00</text>
<text x="1398.08" y="919.10" font-size="18.75" font-weight="normal" fill="#111a2e" textLength="42.35" lengthAdjust="spacingAndGlyphs">80.00</text>
<text x="1466.08" y="956.00" font-size="18.75" font-weight="normal" fill="#111a2e" textLength="42.35" lengthAdjust="spacingAndGlyphs">16.00</text>
<text x="1544.08" y="956.00" font-size="18.75" font-weight="normal" fill="#111a2e" textLength="42.35" lengthAdjust="spacingAndGlyphs">16.00</text>
<text x="1253.19" y="992.90" font-size="18.75" font-weight="normal" fill="#111a2e" textLength="51.77" lengthAdjust="spacingAndGlyphs">160.00</text>
<text x="1321.19" y="992.90" font-size="18.75" font-weight="normal" fill="#111a2e" textLength="51.77" lengthAdjust="spacingAndGlyphs">320.00</text>
<text x="1398.08" y="992.90" font-size="18.75" font-weight="normal" fill="#111a2e" textLength="42.35" lengthAdjust="spacingAndGlyphs">80.00</text>
<text x="1388.69" y="1029.80" font-size="18.75" font-weight="normal" fill="#111a2e" textLength="51.77" lengthAdjust="spacingAndGlyphs">128.00</text>
<text x="1321.19" y="1066.70" font-size="18.75" font-weight="normal" fill="#111a2e" textLength="51.77" lengthAdjust="spacingAndGlyphs">720.00</text>
<text x="1398.08" y="1066.70" font-size="18.75" font-weight="normal" fill="#111a2e" textLength="42.35" lengthAdjust="spacingAndGlyphs">80.00</text>
<text x="1330.58" y="1103.60" font-size="18.75" font-weight="normal" fill="#111a2e" textLength="42.35" lengthAdjust="spacingAndGlyphs">40.00</text>
<text x="1398.08" y="1103.60" font-size="18.75" font-weight="normal" fill="#111a2e" textLength="42.35" lengthAdjust="spacingAndGlyphs">80.00</text>
<text x="1388.69" y="1140.50" font-size="18.75" font-weight="normal" fill="#111a2e" textLength="51.77" lengthAdjust="spacingAndGlyphs">160.00</text>
<text x="1466.08" y="1140.50" font-size="18.75" font-weight="normal" fill="#111a2e" textLength="42.35" lengthAdjust="spacingAndGlyphs">80.00</text>
<text x="1398.17" y="1177.40" font-size="18.75" font-weight="normal" fill="#111a2e" textLength="42.35" lengthAdjust="spacingAndGlyphs">43.33</text>
<text x="1466.29" y="1177.40" font-size="18.75" font-weight="normal" fill="#111a2e" textLength="42.35" lengthAdjust="spacingAndGlyphs">16.67</text>
<text x="1032.67" y="1214.30" font-size="18.75" font-weight="normal" fill="#111a2e" textLength="42.35" lengthAdjust="spacingAndGlyphs">33.33</text>
<text x="1133.35" y="1214.30" font-size="18.75" font-weight="normal" fill="#111a2e" textLength="32.94" lengthAdjust="spacingAndGlyphs">7.14</text>
<text x="1204.23" y="1214.30" font-size="18.75" font-weight="normal" fill="#111a2e" textLength="32.94" lengthAdjust="spacingAndGlyphs">9.52</text>
<text x="1262.67" y="1214.30" font-size="18.75" font-weight="normal" fill="#111a2e" textLength="42.35" lengthAdjust="spacingAndGlyphs">13.33</text>
<text x="1340.23" y="1214.30" font-size="18.75" font-weight="normal" fill="#111a2e" textLength="32.94" lengthAdjust="spacingAndGlyphs">9.52</text>
<text x="1398.29" y="1214.30" font-size="18.75" font-weight="normal" fill="#111a2e" textLength="42.35" lengthAdjust="spacingAndGlyphs">14.52</text>
<text x="1475.60" y="1214.30" font-size="18.75" font-weight="normal" fill="#111a2e" textLength="32.94" lengthAdjust="spacingAndGlyphs">4.76</text>
<rect x="2223" y="737.5" width="10.5" height="52.5" rx="5.2" fill="#adacab"/>
<rect x="83.50" y="1241.00" width="2474.50" height="46.00" fill="#f3f3f3"/>
<rect x="133.50" y="1241.00" width="1212.10" height="44.00" fill="#ffffff"/>
<rect x="83.50" y="1241.00" width="50.00" height="44.00" fill="#f3f3f3"/>
<rect x="133.00" y="1241.00" width="1.30" height="44.00" fill="#8a8886"/>
<rect x="83.00" y="1241.00" width="1.00" height="44.00" fill="#e6e6e6"/>
<rect x="0.00" y="1285.00" width="2558.00" height="2.00" fill="#f3f3f3"/>
<path d="M97,1257.5 L91.8,1262.2 L97,1266.9 Z" fill="none" stroke="#d2d0ce" stroke-width="1"/>
<path d="M118.8,1257.5 L124.2,1262.2 L118.8,1266.9 Z" fill="none" stroke="#d2d0ce" stroke-width="1"/>
<rect x="319.70" y="1241.00" width="1.10" height="44.00" fill="#c8c6c4"/>
<rect x="513.00" y="1241.00" width="1.10" height="44.00" fill="#c8c6c4"/>
<rect x="734.90" y="1241.00" width="1.10" height="44.00" fill="#c8c6c4"/>
<rect x="991.90" y="1241.00" width="1.10" height="44.00" fill="#c8c6c4"/>
<rect x="1184.70" y="1241.00" width="1.10" height="44.00" fill="#c8c6c4"/>
<rect x="735.40" y="1280.00" width="257.00" height="4.80" fill="#117865"/>
<text x="158.61" y="1269.00" font-size="15.84" font-weight="normal" fill="#252423" textLength="136.60" lengthAdjust="spacingAndGlyphs">Resource Dashboard</text>
<text x="345.82" y="1269.00" font-size="15.84" font-weight="normal" fill="#252423" textLength="141.87" lengthAdjust="spacingAndGlyphs">Resource Plan Details</text>
<text x="537.33" y="1269.00" font-size="15.84" font-weight="normal" fill="#252423" textLength="173.21" lengthAdjust="spacingAndGlyphs">Resource Plan Vs Capacity</text>
<text x="761.04" y="1269.00" font-size="15.84" font-weight="bold" fill="#252423" textLength="206.55" lengthAdjust="spacingAndGlyphs" stroke="#fff" stroke-width="0.3">Compare Resource Plan Hours</text>
<text x="1017.40" y="1269.00" font-size="15.84" font-weight="normal" fill="#252423" textLength="142.01" lengthAdjust="spacingAndGlyphs">Resource Assignment</text>
<text x="1210.93" y="1269.00" font-size="15.84" font-weight="normal" fill="#252423" textLength="111.71" lengthAdjust="spacingAndGlyphs">Work Dashboard</text>
<defs><filter id="sh" x="-50%" y="-50%" width="200%" height="200%"><feDropShadow dx="0" dy="1" stdDeviation="1.5" flood-color="#000" flood-opacity="0.25"/></filter></defs>
<circle cx="2494" cy="1225" r="31" fill="#03a2ef" filter="url(#sh)"/>
<circle cx="2525.4" cy="1206.4" r="12.4" fill="#fff" filter="url(#sh)"/>
<path d="M2521.6,1203.3 A5.3,5.3 0 1 0 2528.4,1203.3" fill="none" stroke="#03a2ef" stroke-width="2"/>
<path d="M2525,1201 V1207.6" fill="none" stroke="#03a2ef" stroke-width="2"/>
<g fill="none" stroke="#fff" stroke-width="2.2"><rect x="2486" y="1220.1" width="14.5" height="10.5" rx="1.5"/></g>
<g fill="#fff"><circle cx="2493.2" cy="1214.7" r="1.8"/><rect x="2492.5" y="1215.5" width="1.5" height="4"/><rect x="2483.3" y="1222.8" width="2" height="3.4"/><rect x="2501.2" y="1222.8" width="2" height="3.4"/><rect x="2489.2" y="1223.3" width="2.3" height="1.6"/><rect x="2495.3" y="1223.3" width="2.3" height="1.6"/><path d="M2491,1231 L2491.2,1235.8 L2496.6,1231 Z"/></g>
<path d="M2489.6,1226.6 Q2493.6,1229.8 2497.6,1226.6" fill="none" stroke="#fff" stroke-width="1.5"/>
</svg>
</body></html>
